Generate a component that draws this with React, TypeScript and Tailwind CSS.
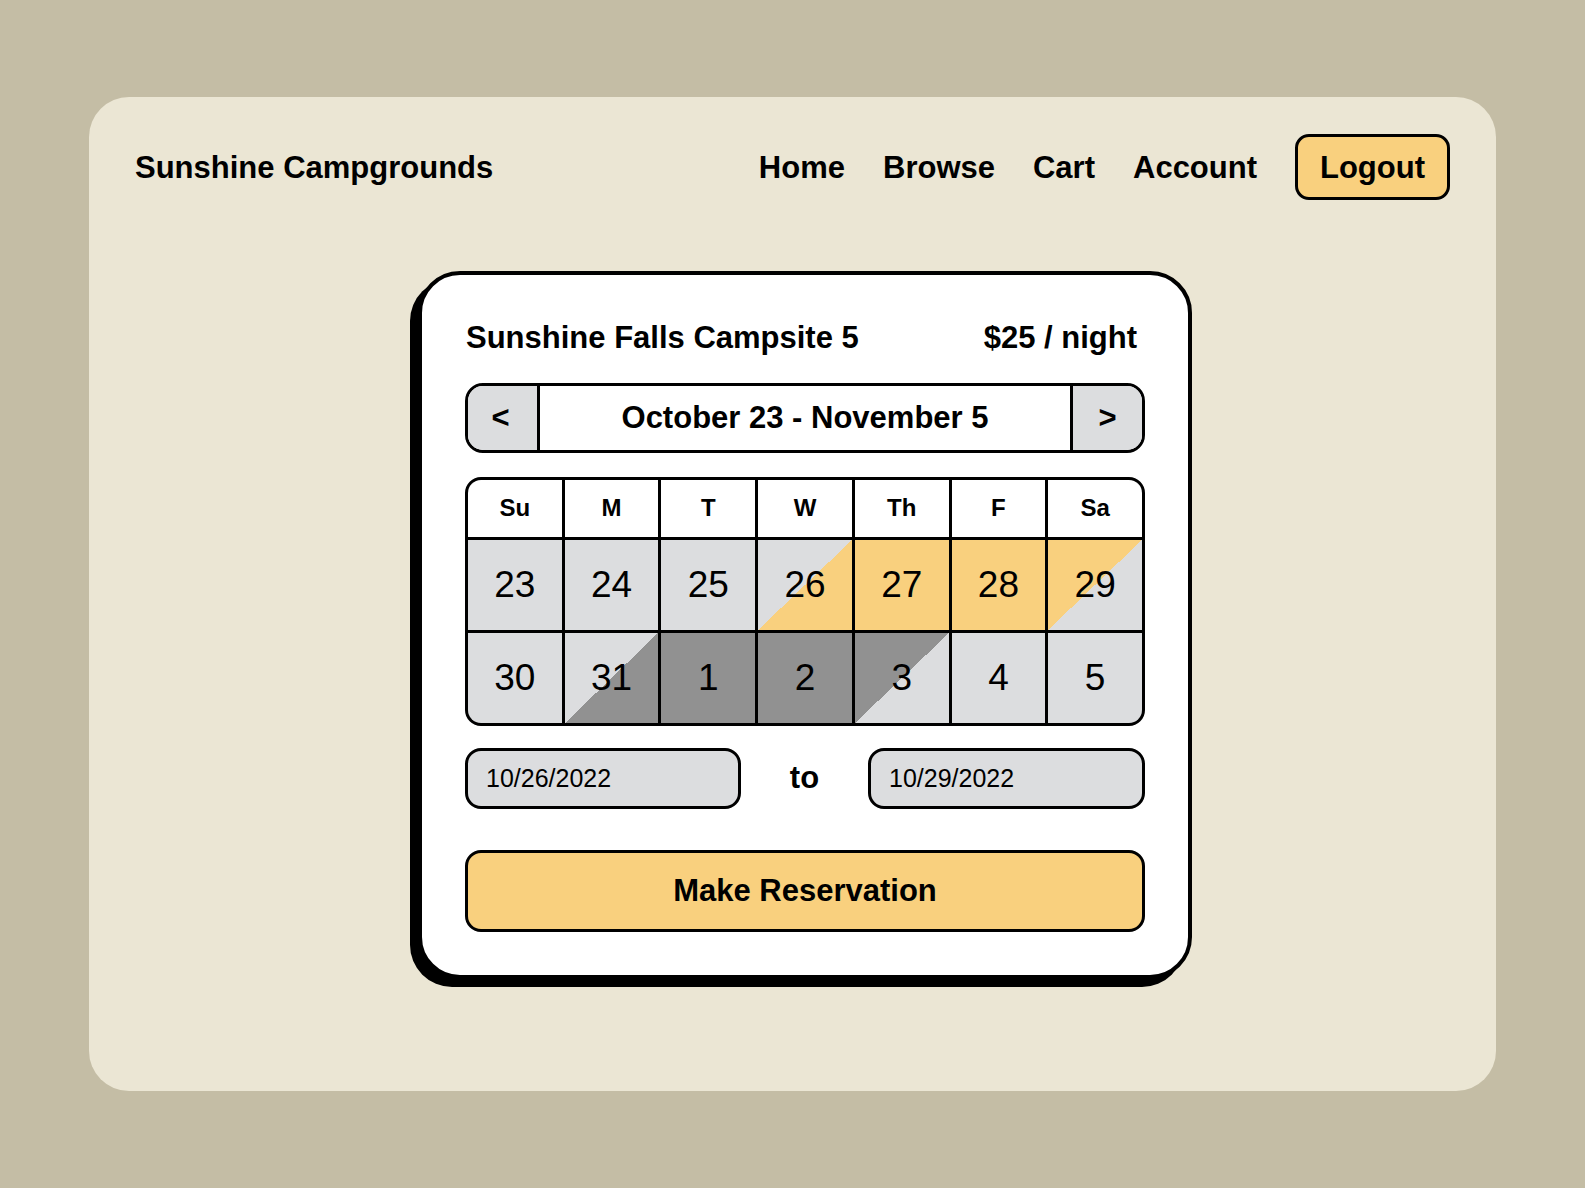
import React from "react";

const yellow = "bg-[#f9d07e]";

type Day = { n: number; bg: string };

const week1: Day[] = [
  { n: 23, bg: "bg-[#dcdddf]" },
  { n: 24, bg: "bg-[#dcdddf]" },
  { n: 25, bg: "bg-[#dcdddf]" },
  { n: 26, bg: "bg-[linear-gradient(to_bottom_right,#dcdddf_50%,#f9d07e_50%)]" },
  { n: 27, bg: yellow },
  { n: 28, bg: yellow },
  { n: 29, bg: "bg-[linear-gradient(to_bottom_right,#f9d07e_50%,#dcdddf_50%)]" },
];

const week2: Day[] = [
  { n: 30, bg: "bg-[#dcdddf]" },
  { n: 31, bg: "bg-[linear-gradient(to_bottom_right,#dcdddf_50%,#919191_50%)]" },
  { n: 1, bg: "bg-[#919191]" },
  { n: 2, bg: "bg-[#919191]" },
  { n: 3, bg: "bg-[linear-gradient(to_bottom_right,#919191_50%,#dcdddf_50%)]" },
  { n: 4, bg: "bg-[#dcdddf]" },
  { n: 5, bg: "bg-[#dcdddf]" },
];

const weekdays = ["Su", "M", "T", "W", "Th", "F", "Sa"];

const App = () => {
  return (
    <div
      className="w-full h-[1188px] bg-[#c4bda5] px-[89px] py-[97px] text-black"
      style={{ fontFamily: '"Liberation Sans", Arial, sans-serif' }}
    >
      <div className="h-full bg-[#ebe6d4] rounded-[40px] overflow-hidden">
        {/* Header */}
        <header className="flex items-center justify-between pl-[46px] pr-[46px] pt-[37px]">
          <h1 className="text-[31px] font-bold leading-none">Sunshine Campgrounds</h1>
          <nav className="flex items-center gap-[38px] text-[31px] font-bold">
            <a className="leading-none">Home</a>
            <a className="leading-none">Browse</a>
            <a className="leading-none">Cart</a>
            <a className="leading-none">Account</a>
            <button className="h-[66px] w-[155px] border-[3px] border-black rounded-[14px] bg-[#f9d07e] font-bold leading-none">
              Logout
            </button>
          </nav>
        </header>

        {/* Reservation card */}
        <div className="pl-[329px] pt-[71px]">
          <div className="w-[774px] h-[708px] bg-white border-4 border-black rounded-[42px] shadow-[-8px_8px_0_0_#000] px-[43px] pt-[45px] pb-[43px] flex flex-col">
            <div className="flex items-center justify-between h-[36px] pl-[1px] pr-[8px] text-[31px] font-bold">
              <span>Sunshine Falls Campsite 5</span>
              <span>$25 / night</span>
            </div>

            <div className="mt-[27px] h-[70px] border-[3px] border-black rounded-[18px] overflow-hidden grid grid-cols-[72px_1fr_72px] text-[31px] font-bold">
              <button className="bg-[#dcdddf] border-r-[3px] border-black flex items-center justify-center pr-[4px]">&lt;</button>
              <div className="flex items-center justify-center">October 23 - November 5</div>
              <button className="bg-[#dcdddf] border-l-[3px] border-black flex items-center justify-center">&gt;</button>
            </div>

            <div className="mt-[24px] border-[3px] border-black rounded-[16px] overflow-hidden bg-black grid grid-cols-7 grid-rows-[57px_90px_90px] gap-[3px]">
              {weekdays.map((d) => (
                <div key={d} className="bg-white flex items-center justify-center pb-[2px] text-[24px] font-bold">
                  {d}
                </div>
              ))}
              {[...week1, ...week2].map((d) => (
                <div key={d.n} className={`${d.bg} flex items-center justify-center text-[37px]`}>
                  {d.n}
                </div>
              ))}
            </div>

            <div className="mt-[22px] flex items-center justify-between">
              <div className="w-[276px] h-[61px] bg-[#dcdddf] border-[3px] border-black rounded-[16px] flex items-center pl-[18px] text-[25px]">
                10/26/2022
              </div>
              <span className="text-[31px] font-bold">to</span>
              <div className="w-[277px] h-[61px] bg-[#dcdddf] border-[3px] border-black rounded-[16px] flex items-center pl-[18px] text-[25px]">
                10/29/2022
              </div>
            </div>

            <button className="mt-[41px] h-[82px] w-full bg-[#f9d07e] border-[3px] border-black rounded-[16px] text-[31px] font-bold">
              Make Reservation
            </button>
          </div>
        </div>
      </div>
    </div>
  );
};

export default App;
